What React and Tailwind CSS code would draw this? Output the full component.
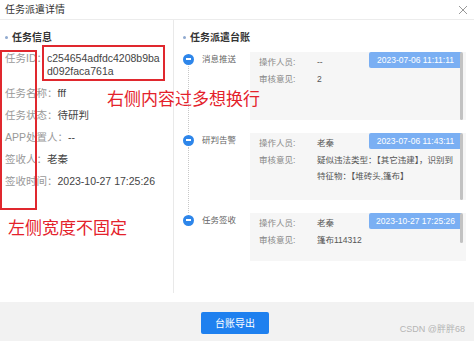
import { useState } from "react";

const info = [
  { label: "任务名称：", value: "fff" },
  { label: "任务状态：", value: "待研判" },
  { label: "APP处置人：", value: "--" },
  { label: "签收人：", value: "老秦" },
  { label: "签收时间：", value: "2023-10-27 17:25:26" },
];

const records = [
  {
    title: "消息推送",
    time: "2023-07-06 11:11:11",
    operator: "--",
    opinion: "2",
    height: "h-[68px]",
    thumb: "h-full",
  },
  {
    title: "研判告警",
    time: "2023-07-06 11:43:11",
    operator: "老秦",
    opinion: "疑似违法类型：【其它违建】，识别到特征物：【堆砖头,篷布】",
    height: "h-[67px]",
    thumb: "h-full",
  },
  {
    title: "任务签收",
    time: "2023-10-27 17:25:26",
    operator: "老秦",
    opinion: "篷布114312",
    height: "h-[48px]",
    thumb: "h-[30px]",
  },
];

function SectionTitle({ children }) {
  return (
    <div className="flex items-center gap-[4px] h-[14px]">
      <span className="w-[3px] h-[3px] rounded-full bg-[#8fa9cf]" />
      <span className="text-[10px] font-bold text-[#333]">{children}</span>
    </div>
  );
}

function TimelineItem({ item, last }) {
  return (
    <div className="relative flex">
      <div className="flex h-[14px] w-[67px] shrink-0 items-center gap-[8px]">
        <span className="flex h-[11px] w-[11px] items-center justify-center rounded-full bg-[#2e86ea]">
          <span className="h-[1.5px] w-[5px] bg-white" />
        </span>
        <span className="text-[8.5px] text-[#666]">{item.title}</span>
      </div>
      <div className={`relative flex-1 bg-[#f6f6f6] pl-[9px] pt-[2px] text-[8.5px] ${item.height}`}>
        <div className="flex flex-col gap-[1px] leading-[16px]">
          <div className="flex">
            <span className="w-[58px] shrink-0 text-[#888]">操作人员:</span>
            <span className="text-[#555]">{item.operator}</span>
          </div>
          <div className="flex">
            <span className="w-[58px] shrink-0 text-[#888]">审核意见:</span>
            <span className="w-[140px] break-all text-[#555]">{item.opinion}</span>
          </div>
        </div>
        <span className="absolute right-[4px] top-0 flex h-[16px] w-[93px] items-center justify-center rounded-[2px] bg-[#7aaff3] text-[8.5px] font-medium text-white">
          {item.time}
        </span>
        <span className={`absolute right-[3px] top-0 w-[3px] rounded-full bg-[#c2c2c2] ${item.thumb}`} />
      </div>
      {!last && (
        <span className="absolute left-[5px] top-[14px] bottom-[-13px] border-l border-dotted border-[#c8c8c8]" />
      )}
    </div>
  );
}

export default function App() {
  const [open, setOpen] = useState(true);

  return (
    <div className="relative flex h-[341px] w-[474px] flex-col overflow-hidden bg-white font-['Liberation_Sans','Noto_Sans_CJK_SC',sans-serif] text-[#333]">
      <div className="flex h-[20px] shrink-0 items-center justify-between border-b border-[#ececec] pl-[5px] pr-[6px]">
        <span className="text-[10px] text-[#333]">任务派遣详情</span>
        <button onClick={() => setOpen(!open)} className="text-[#999]">
          <svg width="10" height="10" viewBox="0 0 10 10" fill="none" stroke="currentColor" strokeWidth="1">
            <path d="M1 1 L9 9 M9 1 L1 9" />
          </svg>
        </button>
      </div>

      <div className="flex h-[282px] shrink-0 pb-[9px]">
        <div className="w-[174px] shrink-0 border-r border-[#e9e9e9] pl-[5px] pr-[11px] pt-[10px]">
          <SectionTitle>任务信息</SectionTitle>
          <div className="mt-[8px] flex flex-col gap-[9px] text-[10.5px] leading-[13px]">
            <div className="flex">
              <span className="shrink-0 text-[#999]">任务ID：</span>
              <span className="min-w-0 break-all text-[#444]">c254654adfdc4208b9bad092faca761a</span>
            </div>
            {info.map((row) => (
              <div key={row.label} className="flex">
                <span className="shrink-0 text-[#999]">{row.label}</span>
                <span className="text-[#444]">{row.value}</span>
              </div>
            ))}
          </div>
        </div>

        <div className="flex-1 pl-[9px] pr-[8px] pt-[10px]">
          <SectionTitle>任务派遣台账</SectionTitle>
          <div className="mt-[8px] flex flex-col gap-[13px]">
            {records.map((item, i) => (
              <TimelineItem key={item.title} item={item} last={i === records.length - 1} />
            ))}
          </div>
        </div>
      </div>

      <div className="flex flex-1 justify-center bg-[#f2f2f2] pr-[4px] pt-[10px]">
        <button className="h-[22px] w-[68px] rounded-[2px] bg-[#1e80ef] text-[10px] text-white">台账导出</button>
      </div>
      <span className="absolute bottom-[6px] right-[9px] text-[9px] leading-[12px] text-[#b5b5b5]">CSDN @胖胖68</span>

      {/* annotations */}
      <span className="absolute left-[42px] top-[45px] h-[36px] w-[123px] border-2 border-[#e0282e]" />
      <span className="absolute left-0 top-[50px] h-[160px] w-[37px] border-2 border-[#e0282e]" />
      <span className="absolute left-[107px] top-[90px] text-[17px] leading-[20px] text-[#e4222b]">右侧内容过多想换行</span>
      <span className="absolute left-[8px] top-[219px] text-[17px] leading-[20px] text-[#e4222b]">左侧宽度不固定</span>
    </div>
  );
}
